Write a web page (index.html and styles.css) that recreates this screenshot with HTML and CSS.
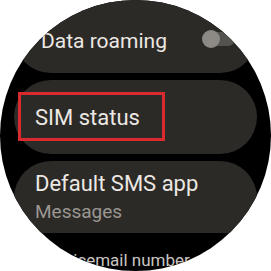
FILE: index.html
```html
<!DOCTYPE html>
<html>
<head>
<meta charset="utf-8">
<link rel="stylesheet" href="styles.css">
</head>
<body>
<div class="watch">
  <div class="list">
    <div class="chip chip-toggle">
      <span class="title title-roam">Data roaming</span>
      <span class="toggle"><span class="thumb"></span></span>
    </div>
    <div class="chip chip-sim">
      <span class="highlight"><span class="title">SIM status</span></span>
    </div>
    <div class="chip chip-sms">
      <span class="title">Default SMS app</span>
      <span class="sub">Messages</span>
    </div>
    <div class="plain">Voicemail number</div>
  </div>
</div>
</body>
</html>
```
FILE: styles.css
```css
html, body {
  margin: 0;
  padding: 0;
  background: #ffffff;
}
.watch {
  width: 271px;
  height: 271px;
  border-radius: 50%;
  overflow: hidden;
  background: #000000;
  font-family: Roboto, "Noto Sans", sans-serif;
}
.list {
  display: flex;
  flex-direction: column;
  gap: 7px;
  margin-top: -1px;
}
.chip {
  margin: 0 14px;
  background: #2c2a27;
  border-radius: 37px;
  height: 74px;
  box-sizing: border-box;
  display: flex;
}
.title {
  color: #ece8e3;
  font-size: 22px;
  line-height: 26px;
}
.title-roam {
  font-size: 21px;
}
.chip-toggle {
  align-items: center;
  justify-content: space-between;
  padding: 10px 22px 0 27px;
}
.toggle {
  width: 30px;
  height: 14px;
  border-radius: 7px;
  background: #55534f;
  position: relative;
  display: block;
  margin-top: -4px;
}
.thumb {
  position: absolute;
  left: -3px;
  top: -2px;
  width: 18px;
  height: 18px;
  border-radius: 50%;
  background: #8d8a86;
}
.chip-sim {
  align-items: center;
  padding-left: 4px;
  padding-bottom: 1px;
}
.highlight {
  display: flex;
  align-items: center;
  height: 49px;
  box-sizing: border-box;
  border: 3px solid #d92a2f;
  padding: 2px 22px 0 14px;
}
.chip-sms {
  height: 72px;
  border-radius: 37px 37px 0 0;
  flex-direction: column;
  padding: 10px 0 0 21px;
}
.sub {
  color: #9a9792;
  font-size: 19px;
  line-height: 24px;
  margin-top: 3px;
}
.plain {
  color: #c9c6c1;
  font-size: 17px;
  line-height: 22px;
  margin: 9px 0 0 53px;
}
```
